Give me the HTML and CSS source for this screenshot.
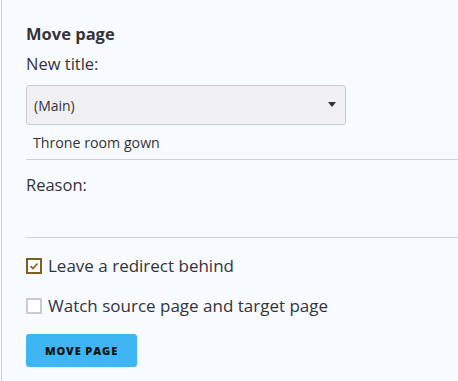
FILE: index.html
```html
<!DOCTYPE html>
<html>
<head>
<meta charset="utf-8">
<link rel="stylesheet" href="styles.css">
</head>
<body>
<div class="panel">
  <h2 class="title">Move page</h2>
  <div class="label">New title:</div>
  <div class="select">
    <span>(Main)</span>
    <span class="arrow"></span>
  </div>
  <div class="titlefield">Throne room gown</div>
  <div class="label reason">Reason:</div>
  <div class="reasonfield"></div>
  <label class="check">
    <span class="box checked">
      <svg width="12" height="12" viewBox="0 0 12 12"><path d="M2.5 6.2 L5 8.5 L9.5 3.5" fill="none" stroke="#8a6a2a" stroke-width="1.8"/></svg>
    </span>
    <span>Leave a redirect behind</span>
  </label>
  <label class="check">
    <span class="box"></span>
    <span>Watch source page and target page</span>
  </label>
  <button class="btn">MOVE PAGE</button>
</div>
</body>
</html>
```

FILE: styles.css
```css
html, body {
  margin: 0;
  padding: 0;
  background: #f8fbfe;
}
body {
  font-family: "Open Sans", "DejaVu Sans", sans-serif;
  color: #33333a;
}
.panel {
  margin-left: 1px;
  border-left: 1px solid #cfd3d8;
  min-height: 381px;
  box-sizing: border-box;
  padding: 24px 0 0 24px;
}
.title {
  margin: 0 0 10px;
  font-size: 16.5px;
  font-weight: 700;
  line-height: 20px;
}
.label {
  font-size: 16.5px;
  line-height: 20px;
  margin-bottom: 11px;
}
.select {
  width: 320px;
  height: 40px;
  box-sizing: border-box;
  border: 1px solid #cbcbcb;
  border-radius: 3px;
  background: #f0f0f2;
  display: flex;
  align-items: center;
  justify-content: space-between;
  padding: 0 9px 0 7px;
  font-size: 14px;
}
.arrow {
  width: 0;
  height: 0;
  border-left: 4.5px solid transparent;
  border-right: 4.5px solid transparent;
  border-top: 5px solid #333;
  margin-top: -2px;
}
.titlefield {
  font-size: 14.2px;
  line-height: 18px;
  padding: 9px 7px 7px;
  border-bottom: 1px solid #cdd0d4;
}
.reason {
  margin-top: 15px;
  margin-bottom: 10px;
}
.reasonfield {
  height: 32px;
  border-bottom: 1px solid #cdd0d4;
}
.check {
  display: flex;
  align-items: center;
  gap: 6px;
  font-size: 17px;
  line-height: 20px;
  margin-top: 18px;
}
.check + .check {
  margin-top: 20px;
}
.box {
  width: 16px;
  height: 16px;
  box-sizing: border-box;
  border: 2px solid #cbcbcb;
  display: flex;
  align-items: center;
  justify-content: center;
  background: #fff;
}
.box.checked {
  border-color: #7f5d1e;
}
.btn {
  margin-top: 18px;
  width: 111px;
  height: 33px;
  border: none;
  border-radius: 3px;
  background: #3fb6f4;
  color: #111;
  font-family: "Open Sans", "DejaVu Sans", sans-serif;
  font-size: 11px;
  font-weight: 800;
  letter-spacing: 0.9px;
  padding: 0;
}
```
